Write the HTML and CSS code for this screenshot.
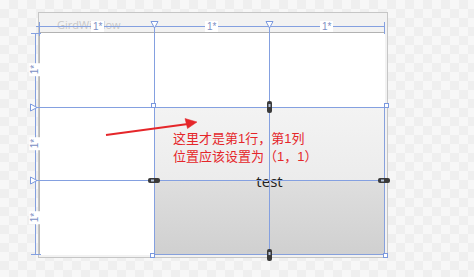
FILE: index.html
```html
<!DOCTYPE html>
<html>
<head>
<meta charset="utf-8">
<link rel="stylesheet" href="styles.css">
</head>
<body>
<div class="stage">
  <div class="window">
    <div class="titlebar"><span class="title">GirdWindow</span></div>
    <div class="grid">
      <div class="cell"></div>
      <button class="btn">test</button>
    </div>
  </div>

  <svg class="adorners" width="474" height="277" viewBox="0 0 474 277">
    <g stroke="#84a0e0" stroke-width="1" fill="none" shape-rendering="crispEdges">
      <!-- top ruler -->
      <line x1="36" y1="26.5" x2="385" y2="26.5"/>
      <line x1="39.5" y1="22" x2="39.5" y2="36"/>
      <line x1="384.5" y1="22" x2="384.5" y2="34"/>
      <!-- left ruler -->
      <line x1="35.5" y1="33" x2="35.5" y2="255"/>
      <line x1="31" y1="33.5" x2="41" y2="33.5"/>
      <line x1="31" y1="254.5" x2="41" y2="254.5"/>
      <!-- column dividers -->
      <line x1="154.5" y1="24" x2="154.5" y2="256"/>
      <line x1="269.5" y1="24" x2="269.5" y2="256"/>
      <!-- row dividers -->
      <line x1="32" y1="107.5" x2="385" y2="107.5"/>
      <line x1="32" y1="180.5" x2="385" y2="180.5"/>
    </g>
    <g stroke="#7a98de" stroke-width="1" fill="#ffffff">
      <polygon points="151,21.5 158,21.5 154.5,28"/>
      <polygon points="266,21.5 273,21.5 269.5,28"/>
      <polygon points="30.5,104 30.5,111 37,107.5"/>
      <polygon points="30.5,177 30.5,184 37,180.5"/>
      <rect x="151.5" y="103.5" width="4" height="4"/>
      <rect x="384.5" y="103.5" width="4" height="4"/>
      <rect x="150.5" y="253.5" width="4" height="4"/>
      <rect x="383.5" y="253.5" width="4" height="4"/>
    </g>
    <g fill="#3a3a3a">
      <rect x="267" y="101" width="5" height="12" rx="2"/>
      <rect x="267" y="249" width="5" height="12" rx="2"/>
      <rect x="148" y="178" width="12" height="5" rx="2"/>
      <rect x="378" y="178" width="12" height="5" rx="2"/>
    </g>
    <g fill="#b8c4dc">
      <rect x="268.5" y="104" width="2" height="3"/>
      <rect x="268.5" y="252" width="2" height="3"/>
      <rect x="151" y="179.5" width="3" height="2"/>
      <rect x="381" y="179.5" width="3" height="2"/>
    </g>
    <!-- red arrow -->
    <g fill="#e5262a" stroke="#e5262a">
      <line x1="106" y1="135" x2="188" y2="124" stroke-width="2"/>
      <polygon points="197,122 185,118.5 187.5,128.5" stroke-width="0.5"/>
    </g>
  </svg>

  <span class="size top c1">1*</span>
  <span class="size top c2">1*</span>
  <span class="size top c3">1*</span>
  <span class="size side r1">1*</span>
  <span class="size side r2">1*</span>
  <span class="size side r3">1*</span>

  <div class="note">
    <div>这里才是第1行，第1列</div>
    <div>位置应该设置为（1，1）</div>
  </div>
</div>
</body>
</html>
```

FILE: styles.css
```css
html, body {
  margin: 0;
  padding: 0;
}

body {
  width: 474px;
  height: 277px;
  overflow: hidden;
  background-color: #f5f5f5;
  background-image: conic-gradient(#efefef 25%, #f7f7f7 0 50%, #efefef 0 75%, #f7f7f7 0);
  background-size: 18px 18px;
  font-family: "Liberation Sans", Arial, sans-serif;
}

.stage {
  position: relative;
  width: 474px;
  height: 277px;
  padding: 12px 0 0 38px;
  box-sizing: border-box;
}

.window {
  width: 350px;
  box-sizing: border-box;
  border: 1px solid #c6c6c6;
  background: #f2f2f2;
  padding: 0 2px 2px 1px;
}

.titlebar {
  height: 19px;
  border-bottom: 1px solid #b2b2b2;
  display: flex;
  align-items: center;
  padding-left: 17px;
}

.title {
  font-family: "Open Sans", "Liberation Sans", sans-serif;
  font-size: 11px;
  color: #c8c8c8;
  margin-top: 3px;
}

.grid {
  display: grid;
  grid-template-columns: 114px 115px 116px;
  grid-template-rows: 74px 73px 75px;
  background: #ffffff;
  border-left: 1px solid #b8b8b8;
  margin-left: -1px;
}

.btn {
  grid-column: 2 / 4;
  grid-row: 2 / 4;
  margin: 0;
  padding: 0;
  border: 1px solid #86a0dc;
  background: linear-gradient(#f3f3f3 0%, #ececec 49.5%, #dedede 50.5%, #d0d0d0 100%);
  font-family: "Open Sans", "Liberation Sans", sans-serif;
  font-size: 15px;
  color: #222222;
  display: flex;
  align-items: center;
  justify-content: center;
  padding-bottom: 1px;
}

.adorners {
  position: absolute;
  left: 0;
  top: 0;
  pointer-events: none;
}

.size {
  position: absolute;
  background: #ffffff;
  color: #8090c4;
  font-family: "Liberation Sans", Arial, sans-serif;
  font-size: 10px;
  line-height: 11px;
  padding: 0 2px;
}

.top { top: 21px; }
.c1 { left: 91px; }
.c2 { left: 205px; }
.c3 { left: 320px; }

.side {
  left: 28px;
  transform: rotate(-90deg);
}
.r1 { top: 64px; }
.r2 { top: 138px; }
.r3 { top: 212px; }

.note {
  position: absolute;
  left: 173px;
  top: 130px;
  font-family: "Liberation Sans", "Noto Sans CJK SC", sans-serif;
  font-size: 13px;
  line-height: 18px;
  color: #e5262a;
}
```
